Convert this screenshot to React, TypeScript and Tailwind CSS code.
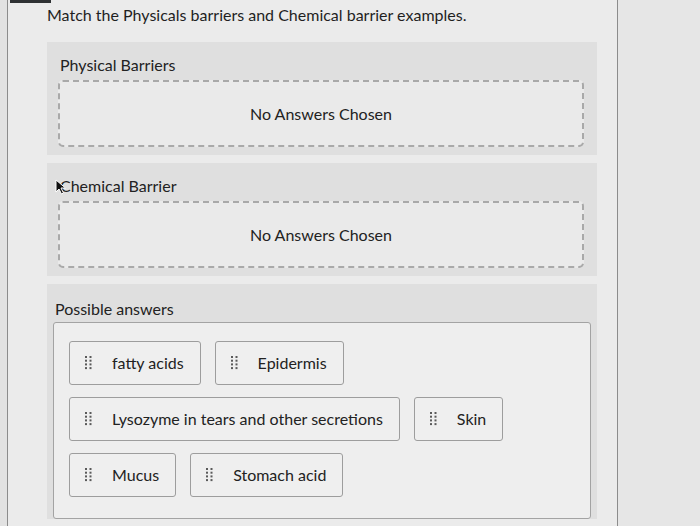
import React from "react";

const CHIPS = [
  "fatty acids",
  "Epidermis",
  "Lysozyme in tears and other secretions",
  "Skin",
  "Mucus",
  "Stomach acid",
];

function Grip() {
  return (
    <svg width="7" height="14" viewBox="0 0 7 14" aria-hidden="true" className="shrink-0">
      {[0, 1, 2, 3].map((r) =>
        [0, 1].map((c) => (
          <rect key={`${r}-${c}`} x={c * 4.5} y={r * 3.7} width="2" height="2" fill="#5a5a5a" />
        ))
      )}
    </svg>
  );
}

function Cursor() {
  return (
    <svg
      width="12"
      height="16"
      viewBox="0 0 12 16"
      aria-hidden="true"
      className="absolute left-[-3px] top-[3px]"
    >
      <path d="M1 1 L1 13 L4 10 L6.5 15 L8.5 14 L6 9 L10.5 9 Z" fill="#111" stroke="#fff" strokeWidth="1" />
    </svg>
  );
}

function DropZone({ label, cursor }: { label: string; cursor?: boolean }) {
  return (
    <div className="flex flex-col bg-[#dfdfdf] px-[11px] pb-[8px] pt-[13px]">
      <div className="relative pl-[2px] text-[16px] leading-[20px] text-[#222]">
        {cursor && <Cursor />}
        {label}
      </div>
      <div className="mr-[2px] mt-[5px] flex h-[67px] items-center justify-center rounded-[5px] border-2 border-dashed border-[#a9a9a9] bg-[#eaeaea] text-[16px] text-[#222]">
        No Answers Chosen
      </div>
    </div>
  );
}

export default function App() {
  return (
    <div
      className="flex h-[526px] w-[700px] overflow-hidden bg-[#e5e5e5]"
      style={{ fontFamily: "Lato, 'Liberation Sans', sans-serif" }}
    >
      <div className="w-[7px] shrink-0 bg-[#e2e2e2]" />
      <div className="relative w-[611px] shrink-0 border-x border-[#8c8c8c] bg-[#ebebeb] pl-[39px] pr-[20px] pt-[5px]">
        <div className="absolute left-[2px] top-0 h-[3px] w-[41px] bg-[#2e3133]" />
        <h1 className="text-[16px] leading-[20px] text-[#1f1f1f]">
          Match the Physicals barriers and Chemical barrier examples.
        </h1>
        <div className="mt-[17px] flex flex-col gap-[8px]">
          <DropZone label="Physical Barriers" />
          <DropZone label="Chemical Barrier" cursor />
          <div className="flex flex-col bg-[#dfdfdf] pl-[6px] pr-[6px] pt-[15px]">
            <div className="pl-[2px] text-[16px] leading-[20px] text-[#222]">Possible answers</div>
            <div className="mt-[3px] flex flex-wrap gap-x-[14px] gap-y-[12px] rounded-[3px] border border-[#a3a3a3] bg-[#eeeeee] pb-[21px] pl-[15px] pr-[15px] pt-[18px]">
              {CHIPS.map((c) => (
                <div
                  key={c}
                  className="flex h-[44px] items-center rounded-[3px] border border-[#9d9d9d] bg-[#efefef] pl-[15px] pr-[16px] text-[16px] text-[#222]"
                >
                  <Grip />
                  <span className="ml-[20px]">{c}</span>
                </div>
              ))}
            </div>
          </div>
        </div>
      </div>
      <div className="flex-1 bg-[#e6e6e6]" />
    </div>
  );
}
